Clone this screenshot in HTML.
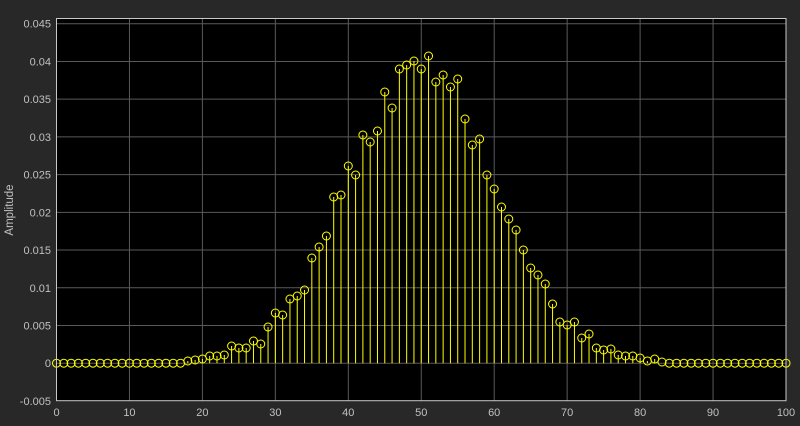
<!DOCTYPE html>
<html><head><meta charset="utf-8"><style>
html,body{margin:0;padding:0;background:#282828;width:800px;height:426px;overflow:hidden}
svg{display:block;font-family:"Liberation Sans",sans-serif}
</style></head><body>
<svg id="s" width="800" height="426" xmlns="http://www.w3.org/2000/svg">
<rect x="0" y="0" width="800" height="426" fill="#282828"/>
<rect x="56.5" y="18.5" width="729.5" height="382.2" fill="#000"/>
<g id="grid" stroke="#5a5a5a" stroke-width="1"></g>
<g id="stems" stroke="#ffff00" stroke-width="1"></g>
<g id="marks" stroke="#ffff00" stroke-width="1" fill="none"></g>
<rect x="56.5" y="18.5" width="729.5" height="382.2" fill="none" stroke="#c8c8c8" stroke-width="1"/>
<g id="lbl" fill="#c0c0c0" font-size="11"></g>
<text x="13" y="210" fill="#c0c0c0" font-size="11.5" text-anchor="middle" transform="rotate(-90 13 210)">Amplitude</text>
</svg>
<script>
var X=function(n){return 56.5+n*7.295};
var Y=function(v){return 363.2-v/0.005*37.72};
var ns="http://www.w3.org/2000/svg";
function el(p,t,a){var e=document.createElementNS(ns,t);for(var k in a)e.setAttribute(k,a[k]);document.getElementById(p).appendChild(e);return e;}
for(var i=10;i<100;i+=10)el("grid","line",{x1:X(i),x2:X(i),y1:18.5,y2:400.7});
for(var j=-1;j<=9;j++){var y=Y(j*0.005);if(j>-1)el("grid","line",{x1:56.5,x2:786,y1:y,y2:y});
 var t=el("lbl","text",{x:51,y:y+4,"text-anchor":"end"});t.textContent=(j==0?"0":(j*0.005).toString());}
for(var i=0;i<=100;i+=10){var t=el("lbl","text",{x:X(i),y:416,"text-anchor":"middle"});t.textContent=i;}
var py={18:361,19:360,20:359,21:356,22:356,23:355,24:346,25:348,26:348,27:341,28:344,29:327,30:313,31:315,32:299,33:296,34:290,35:258,36:247,37:236,38:197,39:195,40:166,41:175,42:135,43:142,44:131,45:92,46:108,47:69,48:65,49:61,50:69,51:56,52:82,53:75,54:87,55:79,56:119,57:145,58:139,59:175,60:189,61:207,62:219,63:230,64:250,65:268,66:275,67:284,68:304,69:322,70:325,71:322,72:338,73:334,74:348,75:350,76:349,77:355,78:356,79:356,80:358,81:361,82:359,83:362};
for(var n=0;n<=100;n++){var y=py[n]||363.2;var x=X(n);
 if(y<362)el("stems","line",{x1:x,x2:x,y1:y,y2:363.2});
 el("marks","circle",{cx:x,cy:y,r:4});}
</script>
</body></html>
